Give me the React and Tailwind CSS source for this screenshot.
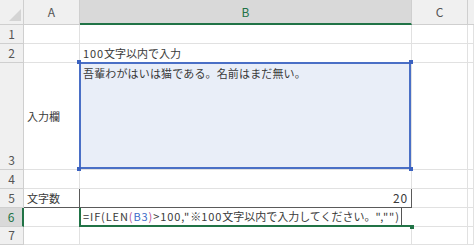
export default function App() {
  const body = "border-r border-b border-[#e1e1e1] bg-white";
  const rh = "flex items-end justify-center pb-[1px] bg-[#f0f0f0] border-r border-b border-[#cfcfcf] text-[12px] text-[#555] leading-[16px]";
  const dark = "border-[#5a5a5a]";
  const lat = "tracking-[0.9px]";
  return (
    <div className="w-[474px] h-[245px] overflow-hidden bg-white font-['Noto_Sans_CJK_JP','Noto_Sans',sans-serif] text-[#3a3a3a]">
      <div className="grid grid-cols-[24px_56px_332px_56px_1fr] grid-rows-[25px_19px_19px_107px_19px_19px_19px_1fr] h-[245px]">
        {/* header row */}
        <div className="relative bg-[#f0f0f0] border-r border-b border-[#cfcfcf]">
          <svg className="absolute left-0 top-0" width="24" height="25" viewBox="0 0 24 25">
            <polygon points="9,21 21,21 21,9" fill="#d4d4d4" />
          </svg>
        </div>
        <div className="flex items-center justify-center bg-[#f0f0f0] border-r border-b border-[#cfcfcf] text-[12px] text-[#555]">A</div>
        <div className="flex items-center justify-center bg-[#d9d9d9] border-r border-[#cfcfcf] border-b-2 border-b-[#217346] text-[12px] text-[#217346]">B</div>
        <div className="flex items-center justify-center bg-[#f0f0f0] border-r border-b border-[#cfcfcf] text-[12px] text-[#555]">C</div>
        <div className="bg-[#f0f0f0] border-b border-[#cfcfcf]"></div>

        {/* row 1 */}
        <div className={rh}>1</div>
        <div className={body}></div>
        <div className={body}></div>
        <div className={body}></div>
        <div className={body}></div>

        {/* row 2 */}
        <div className={rh}>2</div>
        <div className={`border-r border-[#e1e1e1] border-b ${dark} bg-white`}></div>
        <div className={`${body} flex items-end pl-[3px] pb-[1px] text-[11px] leading-[16px]`}>
          <span className={lat}>100</span>文字以内で入力
        </div>
        <div className={body}></div>
        <div className={body}></div>

        {/* row 3 */}
        <div className={rh}>3</div>
        <div className={`border-r border-[#e1e1e1] border-b ${dark} bg-white flex items-center pl-[3px] text-[11px]`}>入力欄</div>
        <div className={`${body} relative`}>
          <div className="absolute left-[-1px] top-[-1px] right-0 bottom-0 border-2 border-[#4a6fc6] bg-[#e9eef8] pl-[2px] pt-[1px] text-[11px] leading-[16px] tracking-[0.15px]">
            吾輩わがはいは猫である。名前はまだ無い。
          </div>
          <div className="absolute left-[-3px] top-[-3px] w-[4px] h-[4px] bg-[#3b62c0]"></div>
          <div className="absolute right-[-2px] top-[-3px] w-[4px] h-[4px] bg-[#3b62c0]"></div>
          <div className="absolute left-[-3px] bottom-[-2px] w-[4px] h-[4px] bg-[#3b62c0]"></div>
          <div className="absolute right-[-2px] bottom-[-2px] w-[4px] h-[4px] bg-[#3b62c0]"></div>
        </div>
        <div className={body}></div>
        <div className={body}></div>

        {/* row 4 */}
        <div className={rh}>4</div>
        <div className={`border-r border-[#e1e1e1] border-b ${dark} bg-white`}></div>
        <div className={`border-r border-[#e1e1e1] border-b ${dark} bg-white`}></div>
        <div className={body}></div>
        <div className={body}></div>

        {/* row 5 */}
        <div className={rh}>5</div>
        <div className={`border-r border-b ${dark} bg-white flex items-end pl-[3px] pb-[1px] text-[11px] leading-[16px]`}>文字数</div>
        <div className={`border-r border-b ${dark} bg-white flex items-end justify-end pr-[3px] pb-[1px] text-[12px] leading-[16px] ${lat}`}>20</div>
        <div className={body}></div>
        <div className={body}></div>

        {/* row 6 */}
        <div className="flex items-end justify-center pb-[1px] bg-[#d9d9d9] border-r-2 border-r-[#217346] border-b border-[#cfcfcf] text-[12px] text-[#217346] leading-[16px]">6</div>
        <div className={body}></div>
        <div className="relative bg-white">
          <div className="absolute left-[-1px] top-0 right-0 bottom-0 border-l-2 border-b-2 border-[#217346]"></div>
          <div className="absolute left-[1px] top-0 bottom-[2px] w-[321px] border-r border-[#555] bg-white flex items-end pl-[2px] pb-[1px] text-[11px] leading-[16px] whitespace-nowrap">
            <span className={lat}>=IF(LEN</span>
            <span className={`text-[#b44f96] ${lat}`}>(</span>
            <span className={`text-[#3d6cc9] ${lat}`}>B3</span>
            <span className={`text-[#b44f96] ${lat}`}>)</span>
            <span className={lat}>&gt;100,"</span>
            <span>※</span>
            <span className={lat}>100</span>
            <span>文字以内で入力してください。</span>
            <span className={lat}>",""</span>
            <span>)</span>
          </div>
          <div className="absolute right-[-2px] bottom-[-2px] w-[4px] h-[4px] bg-[#217346]"></div>
        </div>
        <div className={body}></div>
        <div className={body}></div>

        {/* row 7 */}
        <div className={rh}>7</div>
        <div className={body}></div>
        <div className={body}></div>
        <div className={body}></div>
        <div className={body}></div>
      </div>
    </div>
  );
}
